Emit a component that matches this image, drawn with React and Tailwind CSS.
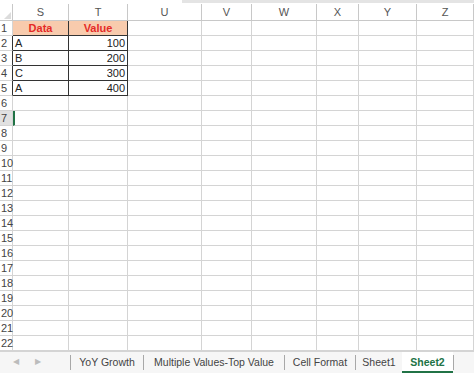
import React from 'react';

const COLS = [
  { name: 'S', w: 56 },
  { name: 'T', w: 59 },
  { name: 'U', w: 74 },
  { name: 'V', w: 50 },
  { name: 'W', w: 65 },
  { name: 'X', w: 42 },
  { name: 'Y', w: 58 },
  { name: 'Z', w: 57 },
];

const DATA = [
  ['Data', 'Value'],
  ['A', '100'],
  ['B', '200'],
  ['C', '300'],
  ['A', '400'],
];

// tab label, width in px
const TABS = [
  ['YoY Growth', 73],
  ['Multiple Values-Top Value', 141],
  ['Cell Format', 71],
  ['Sheet1', 47],
];

function Row({ n }) {
  const inTable = n <= 5;
  const active = n === 7;
  return (
    <div className="flex h-[15px]">
      <div
        className={`w-[13px] shrink-0 border-b border-r border-[#d4d4d4] text-[11px] leading-[14px] text-[#444] pl-[1px] overflow-visible whitespace-nowrap ${active ? 'bg-[#e1e1e1]' : 'bg-white'} ${inTable && n > 1 ? 'border-r-[#333]' : ''}`}
      >
        {n}
      </div>
      {COLS.map((c, i) => {
        const isData = inTable && i < 2;
        const isHead = n === 1 && i < 2;
        let cls = 'shrink-0 border-b border-r border-[#d4d4d4] text-[11px] leading-[14px] px-[2px] whitespace-nowrap ';
        if (isData) {
          cls += 'border-r-[#333] border-b-[#333] ';
          if (isHead) cls += 'bg-[#f8cbad] text-center font-bold text-[#e42b27] ';
          else if (i === 1) cls += 'text-right text-[#222] ';
          else cls += 'text-[#222] ';
        }
        if (active && i === 0) cls += 'border-l-2 border-l-[#217346] ';
        return (
          <div key={c.name} className={cls} style={{ width: c.w }}>
            {isData ? DATA[n - 1][i] : ''}
          </div>
        );
      })}
    </div>
  );
}

export default function App() {
  const rows = Array.from({ length: 22 }, (_, i) => i + 1);
  return (
    <div className="w-[474px] h-[373px] overflow-hidden bg-white flex flex-col font-['Liberation_Sans',Arial,sans-serif]">
      <div className="h-[4px] flex shrink-0">
        <div className="w-[182px]" />
        <div className="flex-1 h-[3px] bg-[#e4e4e4]" />
      </div>
      <div className="flex h-[17px] shrink-0">
        <div className="w-[13px] shrink-0 border-b border-r border-[#c8c8c8] relative">
          <div className="absolute right-[1px] bottom-[1px] w-0 h-0 border-l-[7px] border-l-transparent border-b-[7px] border-b-[#dcdcdc]" />
        </div>
        {COLS.map((c) => (
          <div
            key={c.name}
            className="shrink-0 border-b border-r border-[#c8c8c8] text-[11px] leading-[16px] text-[#555] text-center"
            style={{ width: c.w }}
          >
            {c.name}
          </div>
        ))}
      </div>
      {rows.map((n) => (
        <Row key={n} n={n} />
      ))}
      <div className="flex-1 flex items-start border-t border-[#d4d4d4] bg-[#f6f6f6] text-[10.5px] text-[#444] whitespace-nowrap">
        <div className="w-[70px] shrink-0 h-[20px] flex items-center gap-[16px] pl-[13px] text-[#bcbcbc] text-[8px]">
          <span>◀</span>
          <span>▶</span>
        </div>
        {TABS.map(([t, w]) => (
          <div key={t} className="flex items-center h-[20px] shrink-0" style={{ width: w }}>
            <div className="w-px h-[15px] bg-[#a8a8a8]" />
            <div className="flex-1 text-center leading-[20px]">{t}</div>
          </div>
        ))}
        <div className="w-[51px] shrink-0 h-[21px] bg-white border-b-2 border-[#217346] font-bold text-[#217346] leading-[20px] text-center">
          Sheet2
        </div>
        <div className="flex items-center h-[20px]">
          <div className="w-px h-[15px] bg-[#a8a8a8]" />
        </div>
      </div>
    </div>
  );
}
